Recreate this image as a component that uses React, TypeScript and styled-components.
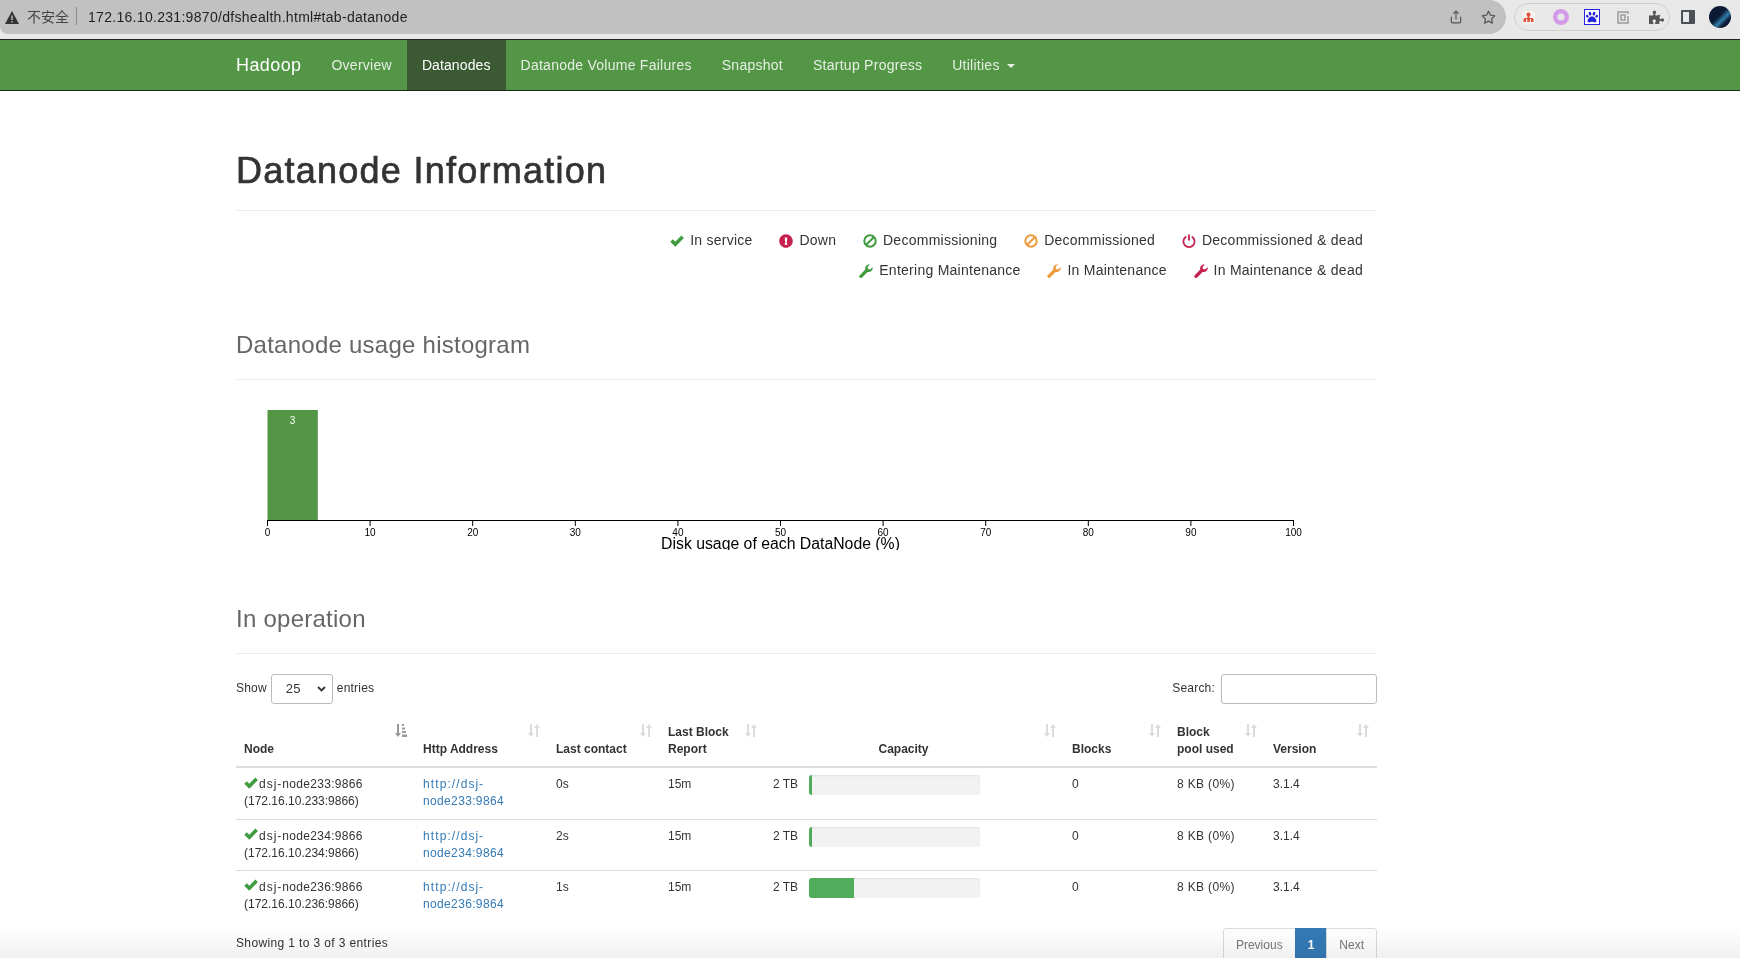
import React from "react";
import styled, { createGlobalStyle } from "styled-components";
import { FaExclamationCircle, FaPuzzlePiece, FaPaw } from "react-icons/fa";
import { FiShare, FiStar } from "react-icons/fi";

const Global = createGlobalStyle`
  html, body { margin: 0; padding: 0; background: #fff; }
  body { font-family: "Liberation Sans", Arial, "Noto Sans CJK SC", sans-serif; font-size: 14px; line-height: 1.42857; color: #333; }
`;

const Page = styled.div`
  position: relative;
  width: 1740px;
  height: 958px;
  overflow: hidden;
`;

const Chrome = styled.div`
  height: 39px;
  background: #e8e8e8;
  border-bottom: 1px solid #222;
  display: flex;
  align-items: flex-start;
`;

const UrlBar = styled.div`
  width: 1506px;
  height: 34px;
  background: #c1c1c1;
  border-radius: 0 17px 17px 8px;
  display: flex;
  align-items: center;
  padding: 0 2px 0 5px;
  box-sizing: border-box;
  font-size: 14px;
  color: #1f1f1f;
`;

const Insecure = styled.span`
  font-family: "Noto Sans CJK SC", "Liberation Sans", sans-serif;
  font-size: 14px;
  color: #444;
  margin: -2px 0 0 8px;
  padding-right: 7px;
  border-right: 1px solid #8d8d8d;
  line-height: 18px;
`;

const Url = styled.span`
  margin-left: 11px;
  padding-top: 1px;
  flex: 1;
  letter-spacing: 0.3px;
`;

const UrlAction = styled.span`
  display: inline-flex;
  width: 32px;
  justify-content: center;
  color: #555;
`;

const ExtPill = styled.div`
  margin: 3px 0 0 8px;
  width: 156px;
  height: 28px;
  box-sizing: border-box;
  border: 1px solid #cfcfcf;
  border-radius: 14px;
  display: flex;
  align-items: center;
  justify-content: space-between;
  padding: 0 4px 0 4px;
`;

const ExtSlot = styled.span`
  width: 18px;
  height: 18px;
  display: inline-flex;
  align-items: center;
  justify-content: center;
`;

const PawBox = styled(ExtSlot)`
  width: 16px;
  height: 16px;
  box-sizing: border-box;
  border: 1px solid #2323e0;
  background: #fff;
  color: #2323e0;
`;

const SideToggle = styled.span`
  margin: 10px 0 0 11px;
  width: 14px;
  height: 14px;
  box-sizing: border-box;
  border: 2px solid #4a4f55;
  border-right-width: 6px;
  border-radius: 1px;
`;

const Avatar = styled.span`
  margin: 6px 0 0 14px;
  width: 22px;
  height: 22px;
  border-radius: 50%;
  background: linear-gradient(135deg, #0c1a33 45%, #2f7ea8 62%, #0e1c38 75%);
`;

const Navbar = styled.nav`
  height: 51px;
  box-sizing: border-box;
  background: #529646;
  border-bottom: 1px solid #1b2a18;
  padding-left: 236px;
  display: flex;
  line-height: 51px;
`;

const Brand = styled.a`
  font-size: 18px;
  color: #fff;
  letter-spacing: 0.4px;
  margin-right: 15px;
`;

const NavItem = styled.a<{ $active?: boolean }>`
  padding: 0 15px;
  font-size: 14px;
  letter-spacing: ${(p) => (p.$active ? "0.1px" : "0.26px")};
  color: ${(p) => (p.$active ? "#fff" : "#e6efe4")};
  background: ${(p) => (p.$active ? "#3b5a33" : "transparent")};
`;

const Caret = styled.span`
  display: inline-block;
  margin-left: 7px;
  vertical-align: middle;
  border-top: 4px solid #e6efe4;
  border-left: 4px solid transparent;
  border-right: 4px solid transparent;
`;

const Container = styled.main`
  width: 1141px;
  margin-left: 236px;
`;

const Title = styled.h1`
  margin: 0;
  padding-top: 58px;
  height: 61px;
  font-size: 36px;
  line-height: 44px;
  font-weight: 400;
  color: #333;
  -webkit-text-stroke: 0.7px #333;
  letter-spacing: 1.25px;
  border-bottom: 1px solid #eee;
`;

const Legend = styled.div`
  padding: 15px 14px 0 0;
  display: flex;
  flex-direction: column;
  align-items: flex-end;
  height: 102px;
`;

const LegendRow = styled.div`
  display: flex;
  gap: 26.75px;
  height: 30px;
  align-items: center;
`;

const LegendItem = styled.span<{ $color: string }>`
  display: inline-flex;
  align-items: center;
  gap: 6px;
  font-size: 14px;
  color: #333;
  letter-spacing: 0.26px;
  svg { color: ${(p) => p.$color}; font-size: 14px; }
`;

const Section = styled.h2`
  margin: 0;
  font-size: 24px;
  line-height: 34px;
  font-weight: 400;
  color: #666;
  letter-spacing: 0.25px;
  border-bottom: 1px solid #eee;
  padding-bottom: 17px;
`;

const Chart = styled.svg`
  display: block;
  width: 1140px;
  height: 170px;
  margin-bottom: 52px;
`;

const Controls = styled.div`
  margin-top: 20px;
  height: 30px;
  display: flex;
  justify-content: space-between;
  align-items: center;
  font-size: 12px;
  letter-spacing: 0.2px;
  color: #333;
`;

const Select = styled.span`
  display: inline-flex;
  align-items: center;
  justify-content: space-between;
  box-sizing: border-box;
  width: 62px;
  height: 30px;
  margin: 0 4px 0 4px;
  padding: 0 6px 0 14px;
  border: 1px solid #bbb;
  border-radius: 3px;
  vertical-align: middle;
  font-size: 13px;
`;

const SearchBox = styled.span`
  display: inline-block;
  box-sizing: border-box;
  width: 156px;
  height: 30px;
  margin-left: 6px;
  border: 1px solid #bbb;
  border-radius: 3px;
  vertical-align: middle;
`;

const Table = styled.table`
  margin-top: 12px;
  width: 1141px;
  table-layout: fixed;
  border-collapse: collapse;
  font-size: 12px;
  line-height: 17.14px;
`;

const Th = styled.th<{ $center?: boolean }>`
  position: relative;
  padding: 8px 30px 8px 8px;
  text-align: ${(p) => (p.$center ? "center" : "left")};
  vertical-align: bottom;
  font-weight: 700;
  color: #333;
  border-bottom: 2px solid #ddd;
`;

const SortIcon = styled.svg`
  position: absolute;
  top: 8px;
  right: 8px;
  width: 12px;
  height: 13px;
`;

const Td = styled.td`
  padding: 8px;
  vertical-align: top;
  border-top: 1px solid #ddd;
  color: #333;
`;

const FirstTd = styled(Td)`
  border-top: 0;
`;

const Check = styled.span`
  color: #3f9b3f;
  svg {
    display: inline-block;
    vertical-align: baseline;
    margin: -6px 1px -1.5px 0;
  }
`;

const Host = styled.span`
  letter-spacing: 0.3px;
`;

const HostDash = styled.span`
  letter-spacing: 1px;
`;

const Link = styled.a`
  color: #337ab7;
  letter-spacing: 0.35px;
`;

const Protocol = styled.span`
  letter-spacing: 1.1px;
`;

const Pool = styled.span`
  letter-spacing: 0.35px;
`;

const CapacityCell = styled.div`
  display: flex;
  gap: 11px;
  align-items: flex-start;
`;

const Progress = styled.div`
  width: 171px;
  height: 20px;
  margin-top: -1px;
  border-radius: 3px;
  background: #f2f2f2;
  overflow: hidden;
  box-shadow: inset 0 1px 2px rgba(0, 0, 0, 0.07);
`;

const Fill = styled.div`
  height: 100%;
  background: #4fad5b;
`;

const Footer = styled.div`
  margin-top: 7px;
  display: flex;
  justify-content: space-between;
  align-items: flex-start;
  font-size: 12px;
  color: #333;
`;

const Info = styled.span`
  margin-top: 7px;
  letter-spacing: 0.37px;
`;

const Pager = styled.div`
  display: flex;
  height: 34px;
  font-size: 12px;
  line-height: 32px;
`;

const PageBtn = styled.span<{ $active?: boolean }>`
  padding: 0 12px;
  border: 1px solid ${(p) => (p.$active ? "#337ab7" : "#ddd")};
  background: ${(p) => (p.$active ? "#337ab7" : "#fff")};
  color: ${(p) => (p.$active ? "#fff" : "#777")};
  font-weight: ${(p) => (p.$active ? 700 : 400)};
  margin-left: -1px;
  border-radius: 3px 0 0 0;
  &:not(:first-child) { border-radius: 0 3px 0 0; }
  &:nth-child(2) { border-radius: 0; }
`;

const BottomFade = styled.div`
  position: absolute;
  left: 0;
  right: 0;
  bottom: 0;
  height: 32px;
  pointer-events: none;
  mix-blend-mode: multiply;
  background: linear-gradient(to bottom, #fff, #f0f0f0);
`;

const ticks = [0, 10, 20, 30, 40, 50, 60, 70, 80, 90, 100];

const Sort = ({ active }: { active?: boolean }) => (
  <SortIcon viewBox="0 0 12 13">
    {active ? (
      <g fill="#999">
        <path d="M2 0h2v9h2L3 13 0 9h2z" />
        <rect x="7" y="0" width="2" height="2" />
        <rect x="7" y="3.5" width="3" height="2" />
        <rect x="7" y="7" width="4" height="2" />
        <rect x="7" y="10.5" width="5" height="2.5" />
      </g>
    ) : (
      <g fill="#dcdcdc">
        <path d="M2 0h2v9h2L3 13 0 9h2z" />
        <path d="M8 13h2V4h2L9 0 6 4h2z" />
      </g>
    )}
  </SortIcon>
);

const CheckIcon = () => (
  <svg width="14" height="14" viewBox="0 0 14 14" fill="currentColor">
    <path d="M0.3 7.8L2.8 5.3L5.3 7.8L11.4 1.6L13.9 4.1L5.3 12.7z" />
  </svg>
);

const BanIcon = () => (
  <svg width="14" height="14" viewBox="0 0 14 14" fill="none" stroke="currentColor" strokeWidth="2">
    <circle cx="7" cy="7" r="5.7" />
    <path d="M3.2 10.8L10.8 3.2" />
  </svg>
);

const PowerIcon = () => (
  <svg width="14" height="14" viewBox="0 0 14 14" fill="none" stroke="currentColor" strokeWidth="1.8">
    <path d="M4.2 2.6a5.6 5.6 0 1 0 5.6 0" />
    <path d="M7 0.5v6" />
  </svg>
);

const WrenchIcon = () => (
  <svg width="14" height="14" viewBox="0 0 14 14" fill="currentColor">
    <path d="M13.6 3.2L11 5.6L9 5L8.5 3L11 0.5A4 4 0 0 0 6.3 5.6L0.8 11.2A1.6 1.6 0 0 0 3.1 13.5L8.6 7.9A4 4 0 0 0 13.6 3.2z" />
  </svg>
);

const rows = [
  { n: "233", c: "0s", pct: 1.5 },
  { n: "234", c: "2s", pct: 1.5 },
  { n: "236", c: "1s", pct: 26 },
];

const cols = [179, 133, 112, 105, 299, 105, 96, 112];

export default function App() {
  return (
    <Page>
      <Global />
      <Chrome>
        <UrlBar>
          <svg width="14" height="13" viewBox="0 0 14 13"><path d="M7 0l7 13H0z" fill="#333" /><rect x="6.3" y="4.5" width="1.4" height="4.5" fill="#c1c1c1" /><rect x="6.3" y="10" width="1.4" height="1.5" fill="#c1c1c1" /></svg>
          <Insecure>不安全</Insecure>
          <Url>172.16.10.231:9870/dfshealth.html#tab-datanode</Url>
          <UrlAction><FiShare size={14} /></UrlAction>
          <UrlAction><FiStar size={15} /></UrlAction>
        </UrlBar>
        <ExtPill>
          <ExtSlot>
            <svg width="13" height="13" viewBox="0 0 13 13"><rect width="13" height="13" rx="2" fill="#f6f0ee" /><g fill="#e2503c"><circle cx="6.5" cy="3.5" r="2" /><rect x="5.5" y="5" width="2" height="4" /><rect x="2" y="7" width="9" height="1" /><rect x="1.5" y="8" width="2.5" height="3" /><rect x="5.3" y="8" width="2.5" height="3" /><rect x="9" y="8" width="2.5" height="3" /></g></svg>
          </ExtSlot>
          <ExtSlot>
            <svg width="16" height="16" viewBox="0 0 16 16"><circle cx="8" cy="8" r="5.8" fill="none" stroke="#d49ae8" strokeWidth="4.4" /></svg>
          </ExtSlot>
          <PawBox><FaPaw size={12} /></PawBox>
          <ExtSlot>
            <svg width="13" height="13" viewBox="0 0 13 13" fill="none" stroke="#9c9c9c" strokeWidth="1.5"><path d="M11 3V1H1v11h10V5M4 4h4v5H4z" /></svg>
          </ExtSlot>
          <ExtSlot><FaPuzzlePiece size={15} color="#555" /></ExtSlot>
        </ExtPill>
        <SideToggle />
        <Avatar />
      </Chrome>

      <Navbar>
        <Brand>Hadoop</Brand>
        <NavItem>Overview</NavItem>
        <NavItem $active>Datanodes</NavItem>
        <NavItem>Datanode Volume Failures</NavItem>
        <NavItem>Snapshot</NavItem>
        <NavItem>Startup Progress</NavItem>
        <NavItem>Utilities<Caret /></NavItem>
      </Navbar>

      <Container>
        <Title>Datanode Information</Title>
        <Legend>
          <LegendRow>
            <LegendItem $color="#3f9b3f"><CheckIcon />In service</LegendItem>
            <LegendItem $color="#c4214f"><FaExclamationCircle />Down</LegendItem>
            <LegendItem $color="#3f9b3f"><BanIcon />Decommissioning</LegendItem>
            <LegendItem $color="#ec9a3c"><BanIcon />Decommissioned</LegendItem>
            <LegendItem $color="#c4214f"><PowerIcon />Decommissioned &amp; dead</LegendItem>
          </LegendRow>
          <LegendRow>
            <LegendItem $color="#3f9b3f"><WrenchIcon />Entering Maintenance</LegendItem>
            <LegendItem $color="#ec9a3c"><WrenchIcon />In Maintenance</LegendItem>
            <LegendItem $color="#c4214f"><WrenchIcon />In Maintenance &amp; dead</LegendItem>
          </LegendRow>
        </Legend>

        <Section>Datanode usage histogram</Section>
        <Chart viewBox="0 0 1140 170">
          <rect x="31.5" y="30" width="50.3" height="110" fill="#529646" />
          <text x="56.5" y="44" textAnchor="middle" fontSize="10" fill="#fff" fontFamily="Liberation Sans">3</text>
          <line x1="31.5" x2="1057.5" y1="140.5" y2="140.5" stroke="#000" />
          {ticks.map((t) => (
            <g key={t}>
              <line x1={31.5 + t * 10.26} x2={31.5 + t * 10.26} y1="140" y2="146" stroke="#000" />
              <text x={31.5 + t * 10.26} y="156" textAnchor="middle" fontSize="10" fill="#000" fontFamily="Liberation Sans">{t}</text>
            </g>
          ))}
          <text x="544.5" y="169" textAnchor="middle" fontSize="15.8" fill="#000" fontFamily="Liberation Sans">Disk usage of each DataNode (%)</text>
        </Chart>

        <Section>In operation</Section>
        <Controls>
          <span>Show<Select>25<svg width="9" height="6" viewBox="0 0 9 6"><path d="M1 1l3.5 3.5L8 1" fill="none" stroke="#333" strokeWidth="1.8" /></svg></Select>entries</span>
          <span>Search:<SearchBox /></span>
        </Controls>

        <Table>
          <colgroup>
            {cols.map((w, i) => <col key={i} style={{ width: w }} />)}
          </colgroup>
          <thead>
            <tr>
              <Th>Node<Sort active /></Th>
              <Th>Http Address<Sort /></Th>
              <Th>Last contact<Sort /></Th>
              <Th>Last Block Report<Sort /></Th>
              <Th $center>Capacity<Sort /></Th>
              <Th>Blocks<Sort /></Th>
              <Th>Block pool used<Sort /></Th>
              <Th>Version<Sort /></Th>
            </tr>
          </thead>
          <tbody>
            {rows.map((r, i) => {
              const C = i === 0 ? FirstTd : Td;
              return (
                <tr key={r.n}>
                  <C><Check><CheckIcon /></Check><HostDash>dsj-</HostDash><Host>node{r.n}:9866</Host> (172.16.10.{r.n}:9866)</C>
                  <C><Link><Protocol>http://</Protocol><HostDash>dsj-</HostDash>node{r.n}:9864</Link></C>
                  <C>{r.c}</C>
                  <C>15m</C>
                  <C>
                    <CapacityCell>
                      2 TB
                      <Progress><Fill style={{ width: `${r.pct}%` }} /></Progress>
                    </CapacityCell>
                  </C>
                  <C>0</C>
                  <C><Pool>8 KB (0%)</Pool></C>
                  <C>3.1.4</C>
                </tr>
              );
            })}
          </tbody>
        </Table>

        <Footer>
          <Info>Showing 1 to 3 of 3 entries</Info>
          <Pager>
            <PageBtn>Previous</PageBtn>
            <PageBtn $active>1</PageBtn>
            <PageBtn>Next</PageBtn>
          </Pager>
        </Footer>
      </Container>
      <BottomFade />
    </Page>
  );
}
